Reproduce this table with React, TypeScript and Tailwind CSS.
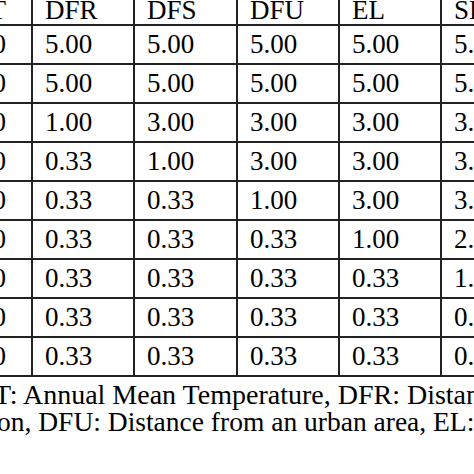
const headers = ["AMT", "DFR", "DFS", "DFU", "EL", "SL"];

const rows = [
  ["1.00", "5.00", "5.00", "5.00", "5.00", "5.00"],
  ["0.20", "5.00", "5.00", "5.00", "5.00", "5.00"],
  ["0.20", "1.00", "3.00", "3.00", "3.00", "3.00"],
  ["0.20", "0.33", "1.00", "3.00", "3.00", "3.00"],
  ["0.20", "0.33", "0.33", "1.00", "3.00", "3.00"],
  ["0.20", "0.33", "0.33", "0.33", "1.00", "2.00"],
  ["0.20", "0.33", "0.33", "0.33", "0.33", "1.00"],
  ["0.20", "0.33", "0.33", "0.33", "0.33", "0.50"],
  ["0.20", "0.33", "0.33", "0.33", "0.33", "0.33"],
];

// column widths incl. left border so lines land at 32/134/237/339/441
const widths = ["w-[102px]", "w-[102px]", "w-[103px]", "w-[102px]", "w-[102px]", "w-[102px]"];

function Cell({ i, text, header }: { i: number; text: string; header?: boolean }) {
  return (
    <div
      className={`flex shrink-0 border-l-2 border-[#222] ${widths[i]} ${
        header ? "items-end" : "items-center"
      } ${i === 0 ? "justify-end pr-[25px]" : "pl-[12px]"}`}
    >
      {text}
    </div>
  );
}

export default function App() {
  return (
    <div className="h-[474px] w-[474px] overflow-hidden bg-white font-['Liberation_Serif',serif] text-[27px] leading-none text-black">
      <div className="ml-[-71px] mt-[-15px] w-max">
        <div className="flex h-[41px] border-b-2 border-[#222]">
          {headers.map((h, i) => (
            <Cell key={h} i={i} text={h} header />
          ))}
        </div>
        {rows.map((r, ri) => (
          <div key={ri} className="flex h-[39px] border-b-2 border-[#222]">
            {r.map((v, i) => (
              <Cell key={i} i={i} text={v} />
            ))}
          </div>
        ))}
      </div>
      <div className="mt-[4px] whitespace-nowrap leading-[27px]">
        <p className="ml-[-6px] text-[28px]">T: Annual Mean Temperature, DFR: Distance from river,</p>
        <p className="ml-[-3px] text-[27.5px]">on, DFU: Distance from an urban area, EL: Elevation</p>
      </div>
    </div>
  );
}
